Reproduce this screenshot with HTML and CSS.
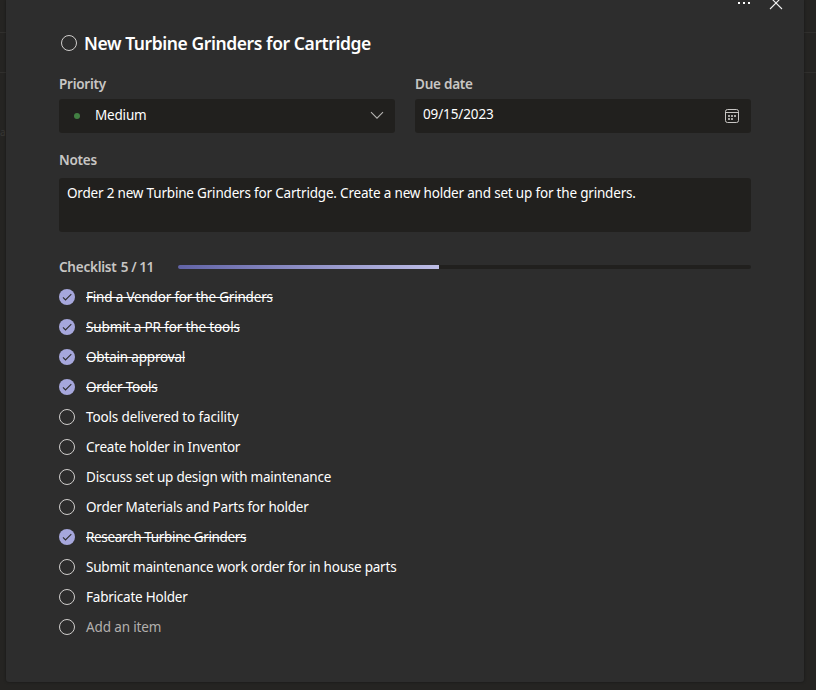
FILE: index.html
```html
<!DOCTYPE html>
<html lang="en">
<head>
<meta charset="utf-8">
<title>Task details</title>
<link rel="stylesheet" href="styles.css">
</head>
<body>
<div class="backdrop"><span class="backdrop-text">a</span></div>
<main class="dialog">
  <header class="toolbar">
    <svg class="more" width="14" height="4" viewBox="0 0 14 4" fill="#fff"><path d="M2 1h2v2H2zM7 1h2v2H7zM12 1h2v2h-2z"/></svg>
    <svg class="close" width="14" height="14" viewBox="0 0 14 14" fill="none" stroke="#f0f0f0" stroke-width="1.1"><path d="M1 1l12 12M13 1L1 13"/></svg>
  </header>
  <div class="heading">
    <span class="circle"></span>
    <h1>New Turbine Grinders for Cartridge</h1>
  </div>
  <div class="fields">
    <section>
      <h2>Priority</h2>
      <div class="field priority">
        <span class="dot"></span><span class="value">Medium</span>
        <svg width="14" height="9" viewBox="0 0 14 9" fill="none" stroke="#b5b3b1" stroke-width="1.1"><path d="M1 1.2l6 6 6-6"/></svg>
      </div>
    </section>
    <section>
      <h2>Due date</h2>
      <div class="field date">
        <span class="value">09/15/2023</span>
        <svg width="14" height="14" viewBox="0 0 14 14"><rect x=".5" y=".5" width="13" height="13" rx="2" fill="none" stroke="#c8c6c4"/><path d="M1 3.5h12" stroke="#c8c6c4"/><path d="M6 6h2v2H6zM9 6h2v2H9zM3 6h2v2H3zM3 9h2v2H3zM6 9h2v2H6z" fill="#a8a6a4"/></svg>
      </div>
    </section>
  </div>
  <section class="notes">
    <h2>Notes</h2>
    <div class="notes-box"><span>Order 2 new Turbine Grinders for Cartridge. Create a new holder and set up for the grinders.</span></div>
  </section>
  <div class="progress-row">
    <h2>Checklist <span>5 / 11</span></h2>
    <div class="track"><div class="fill"></div></div>
  </div>
  <ul class="checklist">
    <li class="done"><svg class="check" viewBox="0 0 16 16"><circle cx="8" cy="8" r="8"/><path d="M4 8.4l2.5 2.5L12.3 5.2"/></svg><span>Find a Vendor for the Grinders</span></li>
    <li class="done"><svg class="check" viewBox="0 0 16 16"><circle cx="8" cy="8" r="8"/><path d="M4 8.4l2.5 2.5L12.3 5.2"/></svg><span class="loose">Submit a PR for the tools</span></li>
    <li class="done"><svg class="check" viewBox="0 0 16 16"><circle cx="8" cy="8" r="8"/><path d="M4 8.4l2.5 2.5L12.3 5.2"/></svg><span>Obtain approval</span></li>
    <li class="done"><svg class="check" viewBox="0 0 16 16"><circle cx="8" cy="8" r="8"/><path d="M4 8.4l2.5 2.5L12.3 5.2"/></svg><span>Order Tools</span></li>
    <li><span class="circle"></span><span class="loose">Tools delivered to facility</span></li>
    <li><span class="circle"></span><span class="snug">Create holder in Inventor</span></li>
    <li><span class="circle"></span><span class="snug">Discuss set up design with maintenance</span></li>
    <li><span class="circle"></span><span class="snug">Order Materials and Parts for holder</span></li>
    <li class="done"><svg class="check" viewBox="0 0 16 16"><circle cx="8" cy="8" r="8"/><path d="M4 8.4l2.5 2.5L12.3 5.2"/></svg><span class="tight">Research Turbine Grinders</span></li>
    <li><span class="circle"></span><span class="snug">Submit maintenance work order for in house parts</span></li>
    <li><span class="circle"></span><span class="snug">Fabricate Holder</span></li>
    <li class="add"><span class="circle"></span><span class="loose">Add an item</span></li>
  </ul>
</main>
</body>
</html>
```
FILE: styles.css
```css
* { box-sizing: border-box; }
body {
  margin: 0;
  width: 816px;
  height: 690px;
  overflow: hidden;
  position: relative;
  padding: 0 12px 8px 6px;
  background: #252422;
  color: #fff;
  font: 13.5px/20px "Noto Sans", "Open Sans", sans-serif;
  letter-spacing: -0.19px;
}
h1, h2, ul { margin: 0; padding: 0; }
.backdrop {
  position: absolute;
  left: 0;
  top: 32px;
  width: 816px;
  height: 41px;
  border: solid #302f2d;
  border-width: 1px 0;
}
.backdrop-text {
  position: absolute;
  left: 0;
  top: 89px;
  font-size: 10px;
  letter-spacing: 0;
  color: #383735;
}
.dialog {
  position: relative;
  height: 682px;
  padding: 0 53px;
  background: #2d2d2d;
  border-radius: 0 0 3px 3px;
  box-shadow: 0 0 3px rgba(0, 0, 0, .4);
}
.toolbar {
  display: flex;
  justify-content: flex-end;
  gap: 19px;
  height: 33px;
  margin-right: -32px;
}
.more { margin-top: 1px; }
.close { margin-top: -4px; }
.heading {
  display: flex;
  align-items: center;
  gap: 7px;
  height: 20px;
  padding-left: 2px;
}
.circle {
  flex: none;
  width: 16px;
  height: 16px;
  border: 1px solid #d0cecc;
  border-radius: 50%;
}
h1 {
  font-size: 17.5px;
  line-height: 24px;
  font-weight: 600;
  letter-spacing: -0.42px;
  white-space: nowrap;
}
h2 {
  color: #c8c6c4;
  font-size: 13.5px;
  line-height: 20px;
  font-weight: 600;
  letter-spacing: -0.24px;
}
.fields {
  display: grid;
  grid-template-columns: 336px 336px;
  gap: 20px;
  margin-top: 21px;
}
.field {
  display: flex;
  align-items: center;
  height: 34px;
  margin-top: 5px;
  background: #21201e;
  border-radius: 3px;
}
.field .value { flex: 1; }
.priority { padding: 0 11px 1px 15px; }
.priority .value { margin-top: -1px; }
.dot {
  width: 6px;
  height: 6px;
  margin-right: 15px;
  border-radius: 50%;
  background: #428043;
}
.date { padding: 0 12px 0 8px; }
.date .value { margin-top: -4px; letter-spacing: -0.12px; }
.notes { margin-top: 17px; }
.notes-box {
  height: 54px;
  margin-top: 8px;
  padding: 5px 8px;
  background: #21201e;
  border-radius: 3px;
  white-space: nowrap;
}
.progress-row {
  display: flex;
  align-items: center;
  height: 20px;
  margin-top: 25px;
}
.progress-row h2 { width: 119px; white-space: nowrap; }
.progress-row span { margin-left: 1px; letter-spacing: -0.4px; }
.track {
  flex: 1;
  height: 4px;
  border-radius: 2px;
  background: #21201e;
  overflow: hidden;
}
.fill {
  width: 45.55%;
  height: 4px;
  background: linear-gradient(90deg, #6264a7, #bdbde6);
}
.checklist {
  margin-top: 5px;
  list-style: none;
}
.checklist li {
  display: flex;
  align-items: center;
  gap: 11px;
  height: 30px;
  white-space: nowrap;
}
.check { width: 16px; height: 16px; }
.check circle { fill: #a6a7dc; }
.check path { fill: none; stroke: #2d2d2d; stroke-width: 1.1; }
.done span { text-decoration: line-through; }
.loose { letter-spacing: -0.13px; }
.snug { letter-spacing: -0.22px; }
.tight { letter-spacing: -0.33px; }
.add { color: #b3b0ad; }
```
